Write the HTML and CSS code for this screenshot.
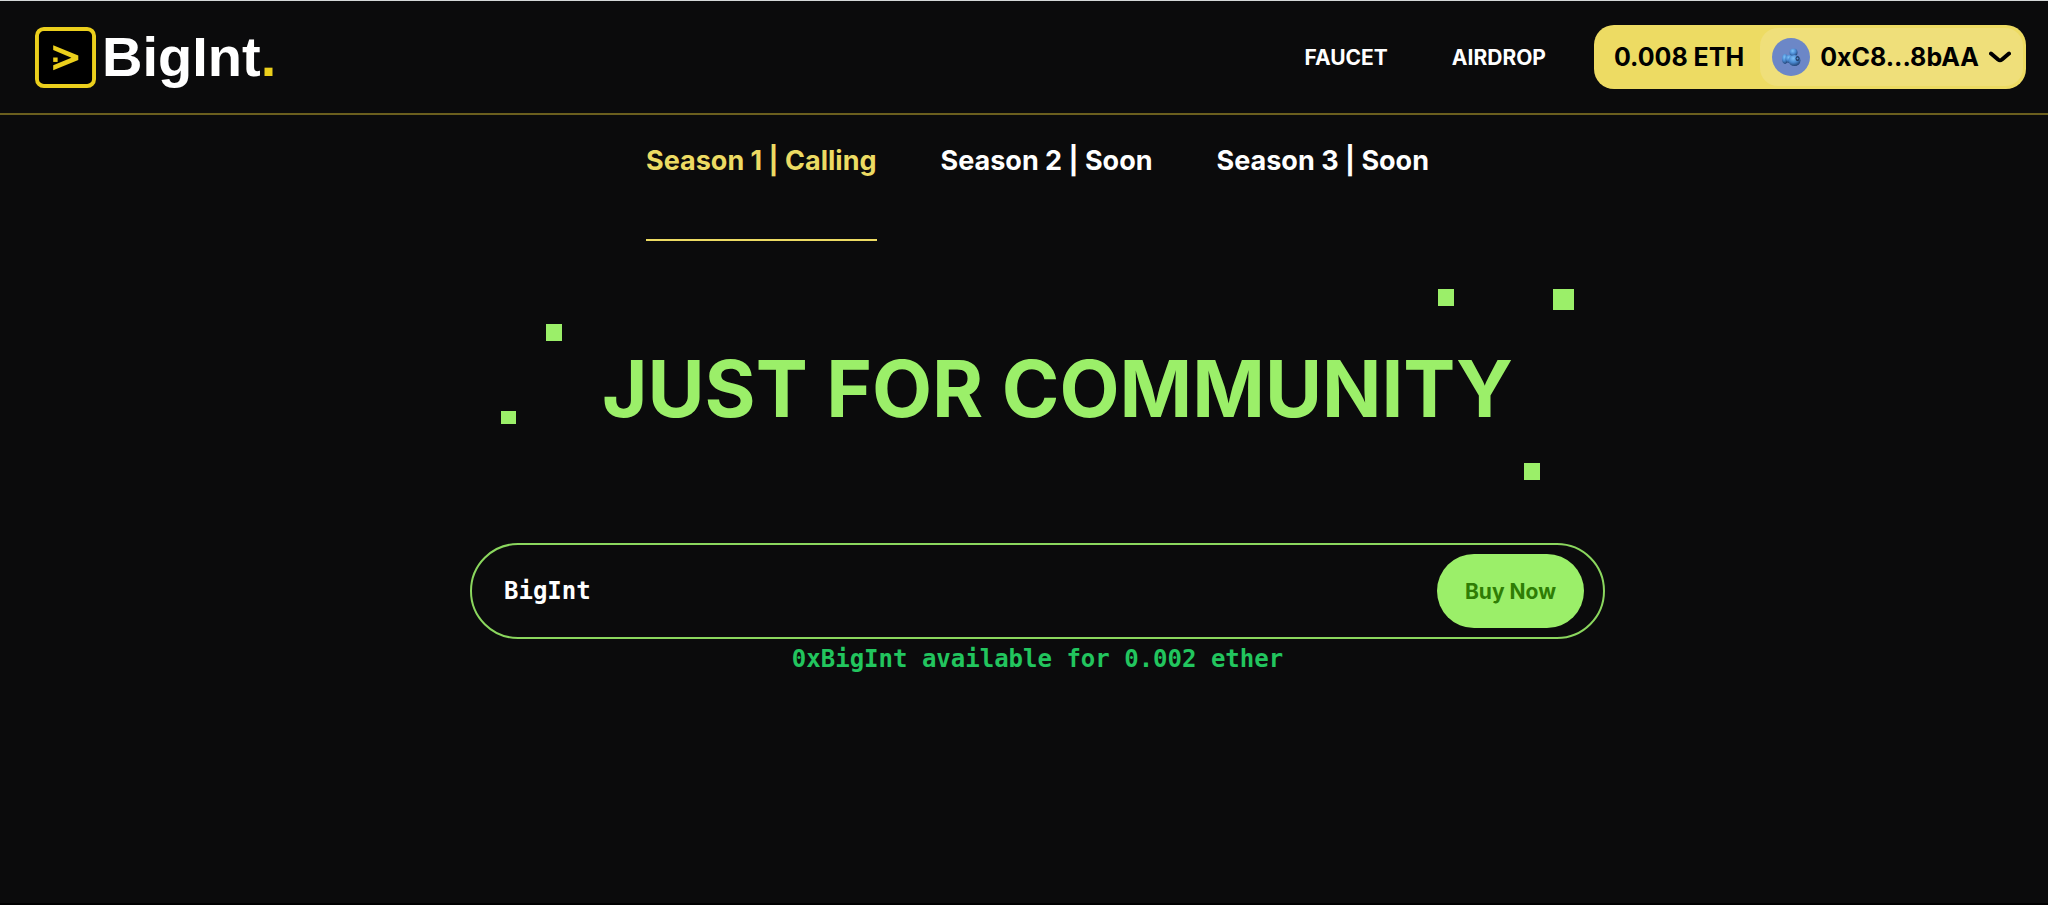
FILE: index.html
```html
<!DOCTYPE html>
<html lang="en">
<head>
    <meta charset="UTF-8">
    <meta name="viewport" content="width=device-width, initial-scale=1.0">
    <title>BigInt</title>
    <link rel="stylesheet" href="styles.css">
</head>
<body>
    <header class="header">
        <a class="logo" href="#">
            <svg class="logo-mark" viewBox="0 0 62 62" aria-hidden="true">
                <rect x="2" y="2" width="58" height="58" rx="7" fill="#000" stroke="#ebcf1c" stroke-width="4"/>
                <path d="M18.500 18.500L44 29v4.500L18.500 44v-5L37 31.200 18.500 23.500z" fill="#ebcf1c"/>
                <rect x="18.500" y="31" width="4.500" height="4.500" fill="#ebcf1c"/>
            </svg>
            <span>BigInt<span class="logo-dot">.</span></span>
        </a>
        <nav class="nav">
            <a href="#">FAUCET</a>
            <a href="#">AIRDROP</a>
        </nav>
        <button class="wallet" type="button">
            <span class="wallet-balance">0.008 ETH</span>
            <span class="wallet-account">
                <svg class="avatar" viewBox="0 0 38 38" aria-hidden="true">
                    <defs>
                        <radialGradient id="ball" cx="0.4" cy="0.3" r="0.75">
                            <stop offset="0" stop-color="#7cc0f8"/>
                            <stop offset="0.5" stop-color="#4a8ad2"/>
                            <stop offset="1" stop-color="#1e3c6c"/>
                        </radialGradient>
                    </defs>
                    <circle cx="19" cy="19" r="19" fill="#6c87c7"/>
                    <ellipse cx="13" cy="21" rx="3" ry="5" fill="url(#ball)"/>
                    <circle cx="21.500" cy="14.500" r="4" fill="url(#ball)"/>
                    <circle cx="17.500" cy="21" r="4" fill="url(#ball)"/>
                    <ellipse cx="22.500" cy="22.500" rx="6" ry="5.500" fill="url(#ball)"/>
                    <ellipse cx="25.500" cy="20.500" rx="2" ry="2.500" fill="#223a63"/>
                    <circle cx="25.500" cy="20.500" r="1" fill="#5a94d8"/>
                </svg>
                <span>0xC8...8bAA</span>
                <svg class="chevron" viewBox="0 0 22 12" aria-hidden="true">
                    <path d="M2 2.500L9 8.500Q11 10 13 8.500L20 2.500" fill="none" stroke="#000" stroke-width="4" stroke-linecap="round"/>
                </svg>
            </span>
        </button>
    </header>

    <main class="main">
        <nav class="tabs">
            <a class="active" href="#">Season 1 | Calling</a>
            <a href="#">Season 2 | Soon</a>
            <a href="#">Season 3 | Soon</a>
        </nav>

        <section class="hero">
            <span class="pixel pixel-1"></span>
            <span class="pixel pixel-2"></span>
            <span class="pixel pixel-3"></span>
            <span class="pixel pixel-4"></span>
            <span class="pixel pixel-5"></span>
            <h1>JUST FOR COMMUNITY</h1>
        </section>

        <form class="buy-form">
            <input type="text" name="name" value="BigInt" aria-label="Name">
            <button type="button">Buy Now</button>
        </form>
        <p class="status">0xBigInt available for 0.002 ether</p>
    </main>
</body>
</html>
```

FILE: styles.css
```css
* {
    box-sizing: border-box;
}
body {
    margin: 0;
    min-height: 100vh;
    background-color: #0b0b0c;
    border-top: 1px solid #d4d8d8;
    border-bottom: 2px solid #000;
    color: #fff;
    font-family: Inter, sans-serif;
    font-weight: 700;
}
a {
    color: inherit;
    text-decoration: none;
}
.header {
    display: flex;
    align-items: center;
    height: 114px;
    padding: 0 22px 0 35px;
    border-bottom: 2px solid #6b5f1e;
}
.logo {
    display: flex;
    align-items: center;
    gap: 6px;
    font-family: "Liberation Sans", Arial, sans-serif;
    font-size: 56px;
    line-height: 62px;
}
.logo-mark {
    width: 61px;
    height: 61px;
}
.logo-dot {
    color: #ebcf1c;
}
.nav {
    display: flex;
    gap: 64px;
    margin-left: auto;
    margin-right: 48px;
    font-size: 21px;
}
.wallet {
    display: flex;
    align-items: center;
    height: 64px;
    padding: 0 3px 0 20px;
    border: none;
    border-radius: 20px;
    background-color: #eddb63;
    color: #000;
    font: inherit;
    font-size: 25px;
    cursor: pointer;
}
.wallet-account {
    display: flex;
    align-items: center;
    gap: 10px;
    height: 58px;
    margin-left: 16px;
    padding: 0 12px;
    border-radius: 18px;
    background-color: #efdf7a;
}
.avatar {
    width: 38px;
    height: 38px;
}
.chevron {
    width: 22px;
    height: 12px;
}
.main {
    padding-left: 27px;
}
.tabs {
    display: flex;
    justify-content: center;
    gap: 64px;
    font-size: 27px;
    line-height: 32px;
}
.tabs a {
    padding: 30px 0 62px;
    border-bottom: 2px solid transparent;
}
.tabs .active {
    color: #eddb63;
    border-color: #eddb63;
}
.hero {
    position: relative;
    max-width: 1135px;
    margin: 0 auto;
    padding: 104px 0 110px 40px;
    color: #9bef69;
    text-align: center;
}
.hero h1 {
    margin: 0;
    font-size: 78px;
    line-height: 88px;
    white-space: nowrap;
}
.pixel {
    position: absolute;
    width: 16px;
    height: 17px;
    background-color: #9bef69;
}
.pixel-1 {
    left: 76px;
    top: 83px;
}
.pixel-2 {
    left: 31px;
    top: 170px;
    width: 15px;
    height: 13px;
}
.pixel-3 {
    right: 151px;
    top: 48px;
}
.pixel-4 {
    right: 31px;
    top: 48px;
    width: 21px;
    height: 21px;
}
.pixel-5 {
    right: 65px;
    top: 222px;
}
.buy-form {
    display: flex;
    align-items: center;
    max-width: 1135px;
    height: 96px;
    margin: 0 auto;
    padding: 0 19px 0 32px;
    border: 2px solid #8bd75e;
    border-radius: 48px;
}
.buy-form input {
    flex: 1;
    min-width: 0;
    padding: 0;
    border: none;
    outline: none;
    background: transparent;
    color: #fff;
    font-family: "DejaVu Sans Mono", monospace;
    font-size: 24px;
    font-weight: 700;
}
.buy-form button {
    height: 74px;
    padding: 0 28px;
    border: none;
    border-radius: 37px;
    background-color: #9bef69;
    color: #2f7d05;
    font: inherit;
    font-size: 21px;
    cursor: pointer;
}
.status {
    margin: 4px 0 0;
    color: #22c55e;
    font-family: "DejaVu Sans Mono", monospace;
    font-size: 24px;
    line-height: 32px;
    text-align: center;
}
```
